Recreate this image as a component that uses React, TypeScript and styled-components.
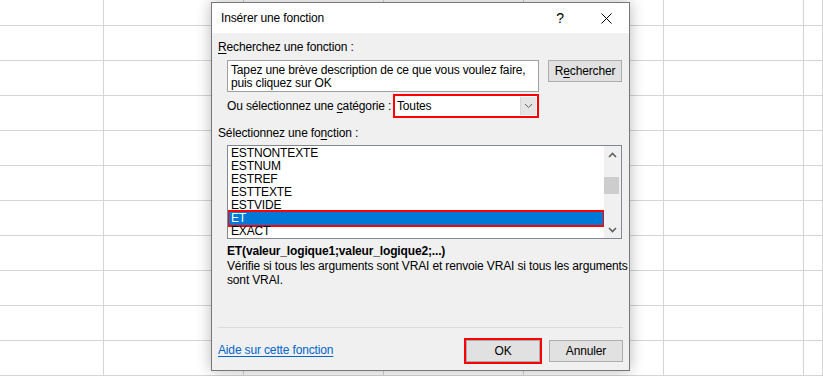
import React from "react";
import styled, { createGlobalStyle } from "styled-components";

const Global = createGlobalStyle`
  html, body { margin: 0; padding: 0; background: #ffffff; overflow: hidden; }
  body { font-family: "Liberation Sans", Arial, sans-serif; }
  #root { width: 823px; height: 376px; position: relative; overflow: hidden; }
`;

const FONT = `"Liberation Sans", Arial, sans-serif`;

const Sheet = styled.div`
  display: grid;
  grid-template-columns: 104px repeat(5, 140px) 1fr;
  grid-auto-rows: 35px;
  grid-template-rows: 26px;
  width: 823px;
  height: 376px;
`;

const Cell = styled.div`
  border-right: 1px solid #d4d4d4;
  border-bottom: 1px solid #d4d4d4;
`;

const Dialog = styled.div`
  position: absolute;
  left: 211px;
  top: 2px;
  width: 417px;
  height: 367px;
  border: 1px solid #777777;
  background: #f0f0f0;
  box-shadow: 0 0 14px rgba(0, 0, 0, 0.28);
  display: flex;
  flex-direction: column;
  font-family: ${FONT};
  font-size: 12px;
  letter-spacing: -0.15px;
  color: #000;
`;

const TitleBar = styled.div`
  height: 30px;
  background: #ffffff;
  display: flex;
  align-items: center;
  padding-left: 9px;
`;

const Title = styled.div`
  flex: 1;
  font-size: 12px;
  line-height: 16px;
`;

const TitleButton = styled.div<{ $w: number }>`
  width: ${(p) => p.$w}px;
  height: 30px;
  display: flex;
  align-items: center;
  justify-content: center;
  font-size: 14px;
`;

const Body = styled.div`
  flex: 1;
  display: flex;
  flex-direction: column;
  padding: 6px 6px 8px 6px;
`;

const Label = styled.div<{ $mt?: number }>`
  line-height: 16px;
  margin-top: ${(p) => p.$mt ?? 0}px;
  white-space: nowrap;
`;

const Key = styled.span`
  text-decoration: underline;
  text-underline-offset: 2px;
`;

const Row = styled.div<{ $mt?: number }>`
  display: flex;
  align-items: flex-start;
  gap: 9px;
  margin-top: ${(p) => p.$mt ?? 0}px;
  margin-left: 9px;
`;

const SearchBox = styled.div`
  border: 1px solid #a0a0a0;
  background: #fff;
  padding: 3px 3px 1px 3px;
  line-height: 13px;
  width: 304px;
  height: 26px;
  white-space: nowrap;
`;

const Button = styled.div<{ $focus?: boolean }>`
  width: 72px;
  height: 20px;
  border: 1px solid #adadad;
  background: #e1e1e1;
  display: flex;
  align-items: center;
  justify-content: center;
  line-height: 16px;
  outline: ${(p) => (p.$focus ? "2px solid #ff0000" : "none")};
  outline-offset: 0px;
`;

const CategoryRow = styled.div`
  display: flex;
  align-items: center;
  margin-top: 2px;
  margin-left: 9px;
  height: 24px;
`;

const CategoryLabel = styled.span`
  flex: 0 0 166px;
  white-space: nowrap;
`;

const Combo = styled.div`
  width: 142px;
  height: 20px;
  border: 2px solid #ff0000;
  background: #fff;
  display: flex;
  align-items: center;
  justify-content: space-between;
`;

const ComboText = styled.span`
  padding-left: 2px;
  line-height: 16px;
`;

const ComboArrow = styled.div`
  width: 15px;
  height: 18px;
  margin-right: 1px;
  background: #e5e5e5;
  border-left: 1px solid #d6d6d6;
  display: flex;
  align-items: center;
  justify-content: center;
`;

const ListBox = styled.div`
  margin-top: 4px;
  margin-left: 9px;
  width: 393px;
  height: 92px;
  border: 1px solid #828790;
  background: #fff;
  display: flex;
`;

const Items = styled.div`
  flex: 1;
  padding-top: 1px;
  overflow: hidden;
`;

const Item = styled.div<{ $selected?: boolean }>`
  height: 13px;
  line-height: 13px;
  padding-left: 2px;
  margin: 0 1px;
  background: ${(p) => (p.$selected ? "#0078d7" : "transparent")};
  color: ${(p) => (p.$selected ? "#fff" : "#000")};
  outline: ${(p) => (p.$selected ? "2px solid #ff0000" : "none")};
  position: relative;
`;

const ScrollBar = styled.div`
  width: 17px;
  background: #f0f0f0;
  display: flex;
  flex-direction: column;
`;

const ScrollArrow = styled.div`
  height: 17px;
  width: 17px;
  display: flex;
  align-items: center;
  justify-content: center;
`;

const Track = styled.div`
  flex: 1;
  width: 17px;
`;

const Thumb = styled.div`
  margin-top: 14px;
  width: 15px;
  height: 17px;
  background: #cdcdcd;
`;

const Signature = styled.div`
  margin-top: 4px;
  margin-left: 9px;
  font-weight: 700;
  line-height: 16px;
`;

const Description = styled.div`
  margin-left: 9px;
  line-height: 14px;
  white-space: nowrap;
`;

const Separator = styled.div`
  margin-top: auto;
  height: 1px;
  background: #dadada;
`;

const Footer = styled.div`
  margin-top: 12px;
  display: flex;
  align-items: center;
  gap: 9px;
`;

const Link = styled.a`
  flex: 1;
  color: #0066cc;
  text-decoration: underline;
  text-underline-offset: 2px;
  line-height: 16px;
  margin-bottom: 3px;
`;

const Chevron = ({ up, thin }: { up?: boolean; thin?: boolean }) => (
  <svg width="9" height="6" viewBox="0 0 9 6">
    <path
      d={up ? "M1 5 L4.5 1.5 L8 5" : "M1 1 L4.5 4.5 L8 1"}
      fill="none"
      stroke="#606060"
      strokeWidth={thin ? 1 : 1.6}
    />
  </svg>
);

const functions = ["ESTNONTEXTE", "ESTNUM", "ESTREF", "ESTTEXTE", "ESTVIDE", "ET", "EXACT"];

export default function App() {
  const cells = Array.from({ length: 11 * 7 });
  return (
    <>
      <Global />
      <Sheet>
        {cells.map((_, i) => (
          <Cell key={i} />
        ))}
      </Sheet>
      <Dialog>
        <TitleBar>
          <Title>Insérer une fonction</Title>
          <TitleButton $w={46}>?</TitleButton>
          <TitleButton $w={46}>
            <svg width="11" height="11" viewBox="0 0 11 11">
              <path d="M0.5 0.5 L10.5 10.5 M10.5 0.5 L0.5 10.5" stroke="#000" strokeWidth="1" />
            </svg>
          </TitleButton>
        </TitleBar>
        <Body>
          <Label>
            <Key>R</Key>echerchez une fonction :
          </Label>
          <Row $mt={5}>
            <SearchBox>
              Tapez une brève description de ce que vous voulez faire,
              <br />
              puis cliquez sur OK
            </SearchBox>
            <Button>
              <span>
                R<Key>e</Key>chercher
              </span>
            </Button>
          </Row>
          <CategoryRow>
            <CategoryLabel>
              Ou sélectionnez une <Key>c</Key>atégorie :
            </CategoryLabel>
            <Combo>
              <ComboText>Toutes</ComboText>
              <ComboArrow>
                <Chevron thin />
              </ComboArrow>
            </Combo>
          </CategoryRow>
          <Label $mt={7}>
            Sélectionnez une fo<Key>n</Key>ction :
          </Label>
          <ListBox>
            <Items>
              {functions.map((f) => (
                <Item key={f} $selected={f === "ET"}>
                  {f}
                </Item>
              ))}
            </Items>
            <ScrollBar>
              <ScrollArrow>
                <Chevron up />
              </ScrollArrow>
              <Track>
                <Thumb />
              </Track>
              <ScrollArrow>
                <Chevron />
              </ScrollArrow>
            </ScrollBar>
          </ListBox>
          <Signature>ET(valeur_logique1;valeur_logique2;...)</Signature>
          <Description>
            Vérifie si tous les arguments sont VRAI et renvoie VRAI si tous les arguments
            <br />
            sont VRAI.
          </Description>
          <Separator />
          <Footer>
            <Link>Aide sur cette fonction</Link>
            <Button $focus>OK</Button>
            <Button>Annuler</Button>
          </Footer>
        </Body>
      </Dialog>
    </>
  );
}
